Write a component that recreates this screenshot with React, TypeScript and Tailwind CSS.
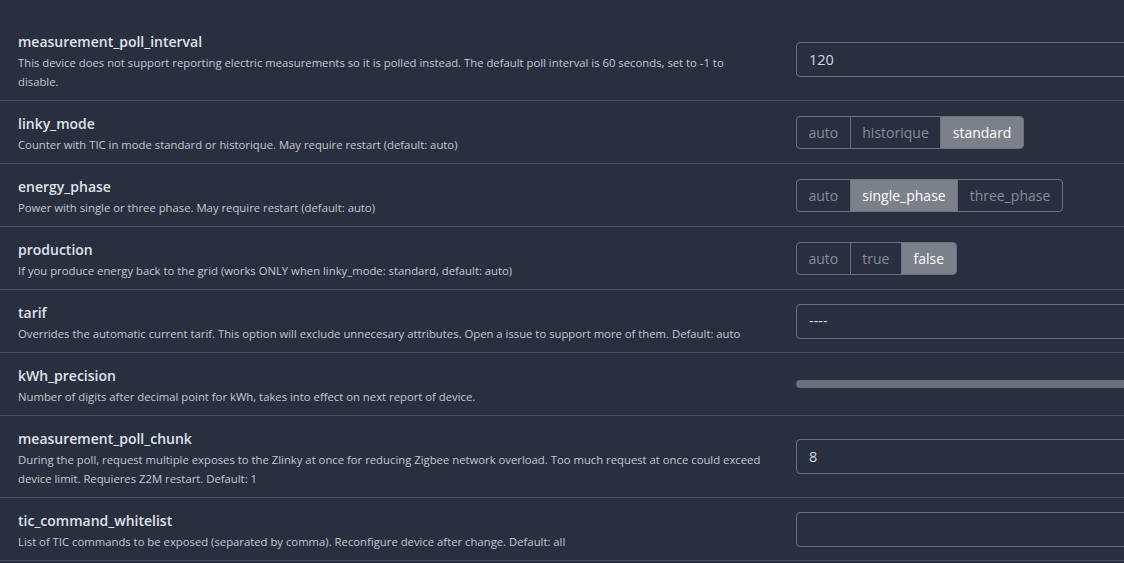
import React from 'react';

type Control =
  | { kind: 'input'; value: string }
  | { kind: 'select'; value: string }
  | { kind: 'slider' }
  | { kind: 'group'; options: string[]; active: string };

interface Setting { name: string; desc: string; control: Control; }

const settings: Setting[] = [
  {
    name: 'measurement_poll_interval',
    desc: 'This device does not support reporting electric measurements so it is polled instead. The default poll interval is 60 seconds, set to -1 to disable.',
    control: { kind: 'input', value: '120' },
  },
  {
    name: 'linky_mode',
    desc: 'Counter with TIC in mode standard or historique. May require restart (default: auto)',
    control: { kind: 'group', options: ['auto', 'historique', 'standard'], active: 'standard' },
  },
  {
    name: 'energy_phase',
    desc: 'Power with single or three phase. May require restart (default: auto)',
    control: { kind: 'group', options: ['auto', 'single_phase', 'three_phase'], active: 'single_phase' },
  },
  {
    name: 'production',
    desc: 'If you produce energy back to the grid (works ONLY when linky_mode: standard, default: auto)',
    control: { kind: 'group', options: ['auto', 'true', 'false'], active: 'false' },
  },
  {
    name: 'tarif',
    desc: 'Overrides the automatic current tarif. This option will exclude unnecesary attributes. Open a issue to support more of them. Default: auto',
    control: { kind: 'select', value: '----' },
  },
  {
    name: 'kWh_precision',
    desc: 'Number of digits after decimal point for kWh, takes into effect on next report of device.',
    control: { kind: 'slider' },
  },
  {
    name: 'measurement_poll_chunk',
    desc: 'During the poll, request multiple exposes to the Zlinky at once for reducing Zigbee network overload. Too much request at once could exceed device limit. Requieres Z2M restart. Default: 1',
    control: { kind: 'input', value: '8' },
  },
  {
    name: 'tic_command_whitelist',
    desc: 'List of TIC commands to be exposed (separated by comma). Reconfigure device after change. Default: all',
    control: { kind: 'input', value: '' },
  },
];

function ControlView({ c }: { c: Control }) {
  if (c.kind === 'input' || c.kind === 'select') {
    return (
      <div className="h-[35px] w-full rounded-[4px] border border-[#6c717c] flex items-center px-3 text-[14.5px] text-[#d3d8df]">
        {c.value}
      </div>
    );
  }
  if (c.kind === 'slider') {
    return <div className="h-[8px] w-full rounded-full bg-[#6b6f79]" />;
  }
  return (
    <div className="inline-flex h-[33px] rounded-[4px] border border-[#6c717c] overflow-hidden">
      {c.options.map((o, i) => (
        <div
          key={o}
          className={
            'px-[11.5px] flex items-center text-[14px] ' +
            (i > 0 ? 'border-l border-[#6c717c] ' : '') +
            (o === c.active ? 'bg-[#7c808a] text-white' : 'text-[#858c98]')
          }
        >
          {o}
        </div>
      ))}
    </div>
  );
}

export default function App() {
  return (
    <div className="w-[1124px] h-[563px] overflow-hidden bg-[#2a2f40] pt-[19px]" style={{ fontFamily: '"Segoe UI", "Open Sans", "Noto Sans", sans-serif' }}>
      {settings.map((s) => (
        <div key={s.name} className="flex items-center border-b border-[#4b505d]">
          <div className="w-[778px] shrink-0 pl-[18px] pr-[14px] pt-3 pb-[9px]">
            <div className="text-[14px] leading-[22px] font-semibold text-[#dfe3e8]">{s.name}</div>
            <div className="text-[11.3px] leading-[19px] text-[#c4c8cf]">{s.desc}</div>
          </div>
          <div className="w-[420px] shrink-0 pl-[18px]">
            <ControlView c={s.control} />
          </div>
        </div>
      ))}
    </div>
  );
}
